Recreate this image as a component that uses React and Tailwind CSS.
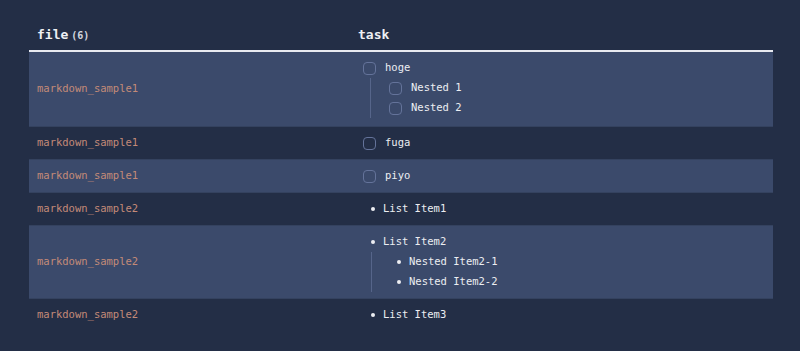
const rows = [
  {
    file: 'markdown_sample1',
    kind: 'check',
    items: [{ text: 'hoge', children: ['Nested 1', 'Nested 2'] }],
  },
  { file: 'markdown_sample1', kind: 'check', items: [{ text: 'fuga' }] },
  { file: 'markdown_sample1', kind: 'check', items: [{ text: 'piyo' }] },
  { file: 'markdown_sample2', kind: 'bullet', items: [{ text: 'List Item1' }] },
  {
    file: 'markdown_sample2',
    kind: 'bullet',
    items: [{ text: 'List Item2', children: ['Nested Item2-1', 'Nested Item2-2'] }],
  },
  { file: 'markdown_sample2', kind: 'bullet', items: [{ text: 'List Item3' }] },
];

function Marker({ kind }) {
  if (kind === 'check') {
    return <span className="w-[13px] h-[13px] rounded-[4px] border border-[#64739a] shrink-0" />;
  }
  return (
    <span className="w-[11px] flex justify-center shrink-0">
      <span className="w-[4px] h-[4px] rounded-full bg-[#eceef2]" />
    </span>
  );
}

function Line({ kind, text }) {
  return (
    <div className="flex items-center h-5">
      <Marker kind={kind} />
      <span className={kind === 'check' ? 'ml-[9px]' : 'ml-[5px]'}>{text}</span>
    </div>
  );
}

function TaskList({ kind, items }) {
  return (
    <ul className={kind === 'check' ? 'pl-[13px]' : 'pl-[17px]'}>
      {items.map((it, i) => (
        <li key={i}>
          <Line kind={kind} text={it.text} />
          {it.children && (
            <ul
              className={
                'border-l border-[#56658a] ' +
                (kind === 'check' ? 'ml-[7px] pl-[18px] mb-[2px]' : 'ml-[4px] pl-[21px]')
              }
            >
              {it.children.map(c => (
                <li key={c}>
                  <Line kind={kind} text={c} />
                </li>
              ))}
            </ul>
          )}
        </li>
      ))}
    </ul>
  );
}

export default function App() {
  return (
    <div
      className="w-[800px] h-[351px] bg-[#232e46] pt-[25px] pl-[29px] pr-[27px] text-[10.5px]"
      style={{ fontFamily: '"DejaVu Sans Mono", "Liberation Mono", monospace' }}
    >
      {/* Header */}
      <div className="grid grid-cols-[321px_1fr] border-b-2 border-[#e8eaf0] pb-1">
        <div className="pl-2 leading-5 text-[#eef0f4]">
          <span className="text-[13px] font-bold">file</span>
          <span className="text-[10px] font-bold text-[#d4d7df] ml-[3px]">(6)</span>
        </div>
        <div className="pl-2 leading-5 text-[13px] font-bold text-[#eef0f4]">task</div>
      </div>

      {/* Rows */}
      {rows.map((r, i) => (
        <div
          key={i}
          className={
            'grid grid-cols-[321px_1fr] ' +
            (i < rows.length - 1 ? 'border-b border-[#34425f] ' : '') +
            (i % 2 === 0 ? 'bg-[#3b4a6b]' : 'bg-[#232e46]')
          }
        >
          <div className="pl-2 flex items-center text-[#c48a78]">{r.file}</div>
          <div className="py-1.5 text-[#eceef2]">
            <TaskList kind={r.kind} items={r.items} />
          </div>
        </div>
      ))}
    </div>
  );
}
